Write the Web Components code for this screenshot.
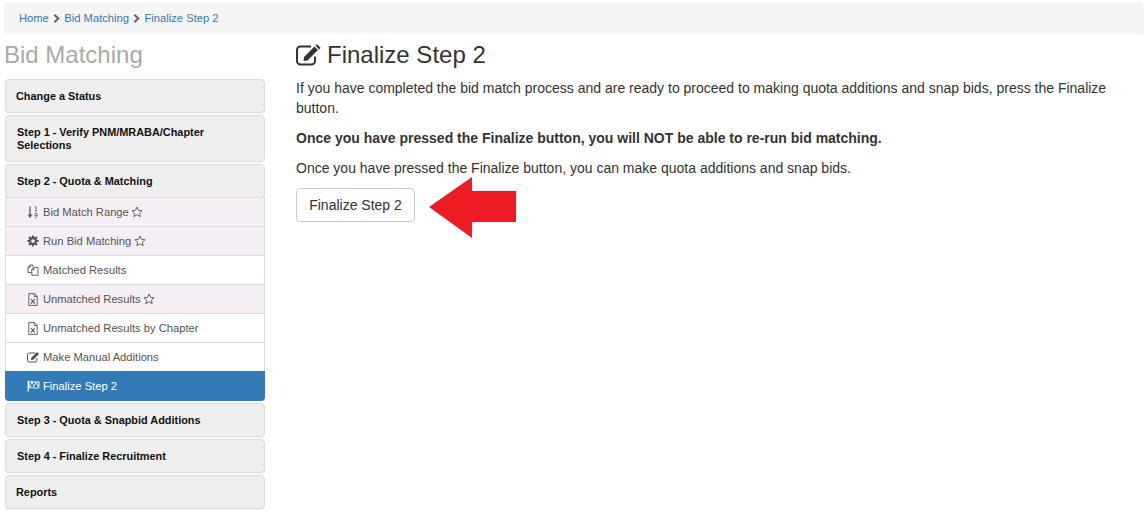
<!DOCTYPE html>
<html><head><meta charset="utf-8"><title>Finalize Step 2</title>
<style>
html,body{margin:0;padding:0;background:#fff;}
body{font:14px/20px "Liberation Sans",Arial,sans-serif;color:#333;}
app-page{display:block;height:525px;overflow:hidden;}
</style></head><body>
<app-page>
<bc-bar slot="bar"><a>Home</a><a>Bid Matching</a><a>Finalize Step 2</a></bc-bar>
<side-nav slot="side" heading="Bid Matching">
  <nav-head tight>Change a Status</nav-head>
  <nav-head>Step 1 - Verify PNM/MRABA/Chapter Selections</nav-head>
  <nav-head>Step 2 - Quota &amp; Matching</nav-head>
  <nav-list>
    <nav-item icon="sort" star tint>Bid Match Range</nav-item>
    <nav-item icon="gear" star tint>Run Bid Matching</nav-item>
    <nav-item icon="copy">Matched Results</nav-item>
    <nav-item icon="excel" star tint>Unmatched Results</nav-item>
    <nav-item icon="excel">Unmatched Results by Chapter</nav-item>
    <nav-item icon="edit">Make Manual Additions</nav-item>
    <nav-item icon="flag" active>Finalize Step 2</nav-item>
  </nav-list>
  <nav-head>Step 3 - Quota &amp; Snapbid Additions</nav-head>
  <nav-head>Step 4 - Finalize Recruitment</nav-head>
  <nav-head tight>Reports</nav-head>
</side-nav>
<main-panel slot="main"></main-panel>
</app-page>
<script>
const ICONS={
sort:'<svg viewBox="0 0 12 13" width="12" height="13"><path d="M3 .5v10.500" fill="none" stroke="currentColor" stroke-width="1.300"/><path d="M.6 8.500L3 12l2.400-3.500z" fill="currentColor"/><path d="M7.800 1.400L9 .6V5M7.800 5h2.400" fill="none" stroke="currentColor" stroke-width=".8"/><circle cx="9" cy="8.500" r="1.300" fill="none" stroke="currentColor" stroke-width=".8"/><path d="M10.300 8.700c0 2-.9 3-2.400 3" fill="none" stroke="currentColor" stroke-width=".8"/></svg>',
gear:'<svg viewBox="0 0 12 12" width="12" height="12"><circle cx="6" cy="6" r="3" fill="none" stroke="currentColor" stroke-width="2.300"/><path d="M6 .4v2M6 9.600v2M.4 6h2M9.600 6h2M2 2l1.500 1.500M8.500 8.500L10 10M2 10l1.500-1.500M8.500 3.500L10 2" stroke="currentColor" stroke-width="1.900"/></svg>',
copy:'<svg viewBox="0 0 12 12" width="12" height="12" fill="none" stroke="currentColor" stroke-width=".9"><path d="M4.500 8.500H1V3.200L3.200 1H6v2.400"/><path d="M3.200 1v2.200H1"/><path d="M4.800 11.200V5.600l2.200-2.200h4v7.800z"/><path d="M7 3.400v2.200H4.800"/></svg>',
excel:'<svg viewBox="0 0 12 13" width="12" height="13" fill="none" stroke="currentColor" stroke-width=".9"><path d="M1.800.6h5.700L10.200 3.300v9.100H1.800z"/><path d="M7.200.8v2.800h2.800"/><path d="M4 6l3.800 4.600M7.800 6L4 10.600" stroke-width="1.100"/></svg>',
edit:'<svg viewBox="0 0 13 12" width="13" height="12"><path d="M9.800 7v2.300A1.700 1.700 0 0 1 8.100 11H2.200A1.700 1.700 0 0 1 .5 9.300V3.700A1.700 1.700 0 0 1 2.200 2H8" fill="none" stroke="currentColor" stroke-width="1"/><path d="M4.300 6.700L10 1l2 2-5.700 5.700-2.300.3z" fill="currentColor"/></svg>',
flag:'<svg viewBox="0 0 13 12" width="13" height="12"><path d="M1.200 .8v10.700" stroke="currentColor" stroke-width="1.200"/><path d="M2 2c3-1.400 5.500 1 10-.2v6C7.500 9 5 6.600 2 8z" fill="none" stroke="currentColor" stroke-width=".9"/><path d="M4 2h2v2.200H4zM8 2.400h2.200v2.200H8zM6 4.400h2v2.200H6zM2.500 4.800H4v2H2.500zM10.200 4.500H12v2.100h-1.800z" fill="currentColor" opacity=".8"/></svg>',
star:'<svg viewBox="0 0 12 12" width="12" height="12"><path d="M6 1l1.500 3.300 3.600.4-2.700 2.400.8 3.500L6 8.800l-3.200 1.800.8-3.500L.9 4.700l3.600-.4z" fill="none" stroke="currentColor" stroke-width=".9"/></svg>'};

function def(name,html,extra){
  customElements.define(name,class extends HTMLElement{
    constructor(){super();const r=this.attachShadow({mode:'open'});r.innerHTML=typeof html==='function'?html(this):html;}
    connectedCallback(){extra&&extra(this)}
  });
}
def('app-page',`<style>:host{display:block}
.top{padding:2px 2px 0 4px}
.cols{display:grid;grid-template-columns:292px 1fr;}
.side{padding:0 0 0 3px;}
.main{padding:0 31px 0 4px;}
</style>
<div class="top"><slot name="bar"></slot></div>
<div class="cols"><div class="side"><slot name="side"></slot></div><div class="main"><slot name="main"></slot></div></div>`);

def('bc-bar',`<style>:host{display:flex;align-items:center;height:32px;background:#f5f5f5;border-radius:4px;padding:0 15px;font-size:11.2px}
::slotted(a){color:#337ab7;text-decoration:none}
</style><slot></slot>`,el=>{
  if(el.dataset.done)return;el.dataset.done=1;
  const links=[...el.children];
  links.slice(0,-1).forEach(a=>{
    const s=document.createElement('bc-sep');a.after(s);
  });
});
def('bc-sep',`<style>:host{display:inline-flex;align-items:center;width:15.500px;justify-content:center;color:#666}</style>
<svg viewBox="0 0 8 10" width="7" height="9"><path d="M1.500 .8L6 5 1.500 9.200" fill="none" stroke="currentColor" stroke-width="2.400"/></svg>`);

def('side-nav',el=>`<style>:host{display:block;width:262px}
h2{margin:0;height:42px;padding:0 0 3px 1px;display:flex;align-items:center;font:normal 24px/26px "Liberation Sans",Arial,sans-serif;color:#aaa;}
.g{display:flex;flex-direction:column;gap:2px;padding:0 0 0 2px}
</style><h2>${el.getAttribute('heading')}</h2><div class="g"><slot></slot></div>`);

def('nav-head',el=>`<style>:host{display:flex;align-items:center;box-sizing:border-box;background:#eee;border:1px solid #ddd;border-radius:4px;padding:10px 15px 9px ${el.hasAttribute('tight')?10:11}px;font:bold 10.900px/13px "Liberation Sans",Arial,sans-serif;color:#111;min-height:34px;box-shadow:0 1px 1px rgba(0,0,0,.05)}
</style><span><slot></slot></span>`);

def('nav-list',`<style>:host{display:flex;flex-direction:column;margin-top:-3px;}</style><slot></slot>`);

def('nav-item',el=>{
  const active=el.hasAttribute('active'),tint=el.hasAttribute('tint');
  return `<style>:host{display:flex;align-items:center;box-sizing:border-box;height:${active?'30px':'29px'};
  padding-left:21px;${active?'padding-bottom:1px;':''}font-size:11.2px;color:${active?'#fff':'#555'};
  background:${active?'#337ab7':tint?'#f5eef5':'#fff'};
  border:1px solid #ddd;border-bottom-width:0;
  ${active?'border-color:#337ab7;border-radius:0 0 4px 4px;':''}}
  .i{width:16px;display:inline-flex;align-items:center;color:${active?'#fff':'#555'}}
  .s{display:inline-flex;margin-left:2.500px;color:#555}
  </style><span class="i">${ICONS[el.getAttribute('icon')]}</span><span><slot></slot></span>${el.hasAttribute('star')?`<span class="s">${ICONS.star}</span>`:''}`;
});

def('main-panel',`<style>:host{display:block;}
h3{display:flex;align-items:center;margin:0 0 2px;height:42px;font:normal 24px/26px "Liberation Sans",Arial,sans-serif;color:#333;gap:6px}
p{margin:0 0 10px;font-size:14px;line-height:20px}
.row{position:relative;height:34px}
button{box-sizing:border-box;height:34px;width:119px;padding:0;background:#fff;border:1px solid #ccc;border-radius:4px;font:14px/20px "Liberation Sans",Arial,sans-serif;color:#333}
svg.a{position:absolute;left:133px;top:-11px}
</style>
<h3><svg viewBox="0 0 25 22" width="25" height="22"><path d="M19 12.500V17a3.500 3.500 0 0 1-3.500 3.500H4.500A3.500 3.500 0 0 1 1 17V6A3.500 3.500 0 0 1 4.500 2.500H15" fill="none" stroke="#333" stroke-width="2"/><path d="M8 13L18.500 2.500 22 6 11.500 16.500 7.500 17z" fill="#333"/><path d="M19.500 1.500L21 .3 24.700 4 23 5.500z" fill="#333"/></svg>Finalize Step 2</h3>
<p>If you have completed the bid match process and are ready to proceed to making quota additions and snap bids, press the Finalize button.</p>
<p><b>Once you have pressed the Finalize button, you will NOT be able to re-run bid matching.</b></p>
<p>Once you have pressed the Finalize button, you can make quota additions and snap bids.</p>
<div class="row"><button>Finalize Step 2</button>
<svg class="a" viewBox="0 0 87 61" width="87" height="61"><path d="M0 30L43 0V14H87V45H43V61z" fill="#ed1c24"/></svg></div>`);
</script>
</body></html>
